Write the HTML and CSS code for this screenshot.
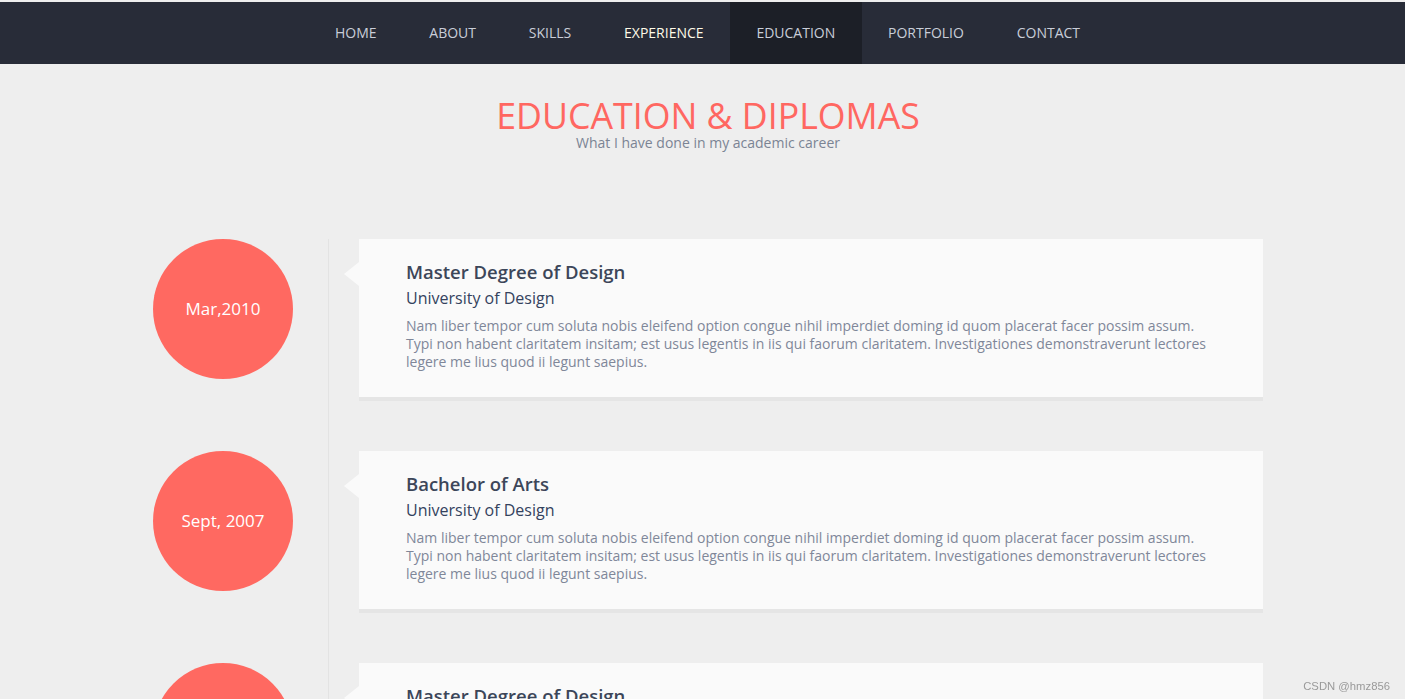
FILE: index.html
```html
<!DOCTYPE html>
<html lang="en">
<head>
<meta charset="utf-8">
<title>Education</title>
<link rel="stylesheet" href="styles.css">
</head>
<body>
<nav class="nav">
  <ul class="nav-list">
    <li><a class="nav-link" href="#">HOME</a></li>
    <li><a class="nav-link" href="#">ABOUT</a></li>
    <li><a class="nav-link" href="#">SKILLS</a></li>
    <li><a class="nav-link nav-hover" href="#">EXPERIENCE</a></li>
    <li><a class="nav-link nav-active" href="#">EDUCATION</a></li>
    <li><a class="nav-link" href="#">PORTFOLIO</a></li>
    <li><a class="nav-link" href="#">CONTACT</a></li>
  </ul>
</nav>

<section class="section">
  <header class="section-head">
    <h2 class="section-title">EDUCATION &amp; DIPLOMAS</h2>
    <p class="section-sub">What I have done in my academic career</p>
  </header>

  <div class="timeline">
    <div class="item">
      <div class="date-col"><div class="date">Mar,2010</div></div>
      <div class="body">
        <div class="card">
          <h3 class="card-title">Master Degree of Design</h3>
          <h4 class="card-sub">University of Design</h4>
          <p class="card-text">Nam liber tempor cum soluta nobis eleifend option congue nihil imperdiet doming id quom placerat facer possim assum. Typi non habent claritatem insitam; est usus legentis in iis qui faorum claritatem. Investigationes demonstraverunt lectores legere me lius quod ii legunt saepius.</p>
        </div>
      </div>
    </div>
    <div class="item">
      <div class="date-col"><div class="date">Sept, 2007</div></div>
      <div class="body">
        <div class="card">
          <h3 class="card-title">Bachelor of Arts</h3>
          <h4 class="card-sub">University of Design</h4>
          <p class="card-text">Nam liber tempor cum soluta nobis eleifend option congue nihil imperdiet doming id quom placerat facer possim assum. Typi non habent claritatem insitam; est usus legentis in iis qui faorum claritatem. Investigationes demonstraverunt lectores legere me lius quod ii legunt saepius.</p>
        </div>
      </div>
    </div>
    <div class="item">
      <div class="date-col"><div class="date">Jan, 2005</div></div>
      <div class="body">
        <div class="card">
          <h3 class="card-title">Master Degree of Design</h3>
          <h4 class="card-sub">University of Design</h4>
          <p class="card-text">Nam liber tempor cum soluta nobis eleifend option congue nihil imperdiet doming id quom placerat facer possim assum. Typi non habent claritatem insitam; est usus legentis in iis qui faorum claritatem. Investigationes demonstraverunt lectores legere me lius quod ii legunt saepius.</p>
        </div>
      </div>
    </div>
  </div>
</section>

<div class="watermark">CSDN @hmz856</div>
</body>
</html>
```

FILE: styles.css
```css
* { box-sizing: border-box; }

html, body {
  margin: 0;
  padding: 0;
  background: #eeeeee;
  font-family: "Open Sans", "Noto Sans", sans-serif;
}

body { padding-top: 2px; }

.nav {
  background: #282c38;
  height: 62px;
}

.nav-list {
  list-style: none;
  margin: 0;
  padding: 0 0 0 10px;
  display: flex;
  justify-content: center;
  height: 100%;
}

.nav-link {
  display: flex;
  align-items: center;
  height: 62px;
  padding: 0 26.4px 2px;
  color: #c9ced9;
  font-size: 14px;
  text-decoration: none;
}

.nav-hover { color: #fffbe8; }

.nav-active { background: #1c1f27; }

.section-head {
  text-align: center;
  padding: 32px 0 0 11px;
}

.section-title {
  margin: 0;
  font-size: 35.7px;
  line-height: 38px;
  font-weight: 400;
  color: #ff6761;
}

.section-sub {
  margin: 0;
  font-size: 14px;
  line-height: 18px;
  color: #7b8494;
}

.timeline {
  margin: 87px 142px 0 153px;
}

.item {
  display: flex;
}

.date-col {
  width: 175px;
  flex: none;
}

.date {
  width: 140px;
  height: 140px;
  padding-bottom: 2px;
  border-radius: 50%;
  background: #ff6961;
  color: #ffffff;
  font-size: 17px;
  display: flex;
  align-items: center;
  justify-content: center;
}

.body {
  flex: 1;
  border-left: 1px solid #e3e3e3;
  padding-left: 30px;
  padding-bottom: 54px;
}

.card {
  position: relative;
  background: #fafafa;
  padding: 19px 47px 26px;
  box-shadow: 0 4px 0 #e5e5e5;
}

.card::before {
  content: "";
  position: absolute;
  left: -15px;
  top: 23px;
  border-top: 12px solid transparent;
  border-bottom: 12px solid transparent;
  border-right: 15px solid #fafafa;
}

.card-title {
  margin: 0;
  font-size: 18.5px;
  line-height: 27px;
  font-weight: 600;
  color: #3c4659;
}

.card-sub {
  margin: 2px 0 0;
  font-size: 16px;
  line-height: 22px;
  font-weight: 400;
  color: #34425e;
}

.card-text {
  margin: 8px 0 0;
  font-size: 14px;
  line-height: 18px;
  color: #7f8799;
}

.watermark {
  position: fixed;
  right: 15px;
  bottom: 7px;
  font-family: "Liberation Sans", Arial, sans-serif;
  font-size: 11.3px;
  color: #9a9a9a;
}
```
